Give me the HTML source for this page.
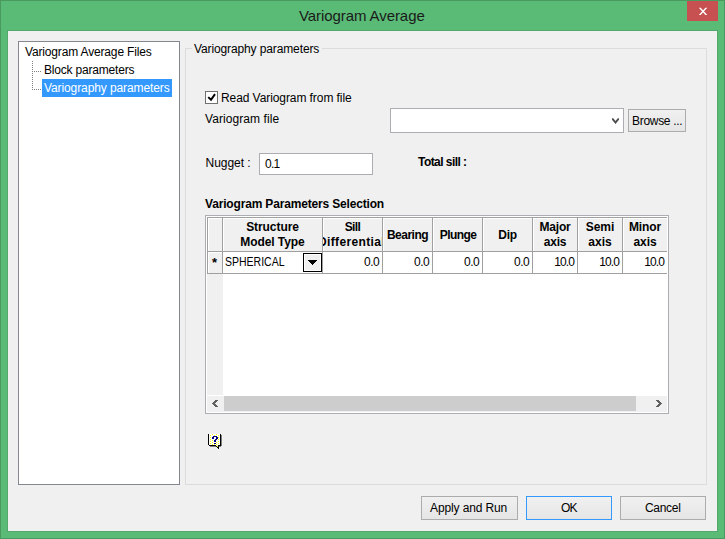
<!DOCTYPE html>
<html>
<head>
<meta charset="utf-8">
<title>Variogram Average</title>
<style>
html,body{margin:0;padding:0;}
body{width:725px;height:539px;overflow:hidden;background:#5abb77;font-family:"Liberation Sans",sans-serif;font-size:12px;color:#000;position:relative;}
.abs{position:absolute;}
.t{position:absolute;white-space:nowrap;line-height:16px;height:16px;font-size:12px;transform-origin:0 50%;}
.b{font-weight:bold;}
#frame{left:0;top:0;width:723px;height:537px;border:1px solid #4a9a60;background:#5abb77;}
#client{left:8px;top:31px;width:709px;height:500px;background:#f0f0f0;}
#clientedge{left:7px;top:30px;width:709px;height:500px;border:1px solid #52a86a;}
#close{left:687px;top:1px;width:31px;height:20px;background:#c75050;}
#tree{left:18px;top:41px;width:160px;height:442px;border:1px solid #828790;background:#fff;}
#sel{left:42px;top:79px;width:130px;height:18px;background:#3399ff;}
.dotv{position:absolute;width:1px;background-image:linear-gradient(to bottom,#808080 50%,transparent 50%);background-size:1px 2px;}
.doth{position:absolute;height:1px;background-image:linear-gradient(to right,#808080 50%,transparent 50%);background-size:2px 1px;}
#group{left:185px;top:48px;width:520px;height:435px;border:1px solid #dcdcdc;}
#grouplab{left:192px;top:40px;width:130px;height:16px;background:#f0f0f0;}
#chk{left:205px;top:91px;width:11px;height:11px;border:1px solid #707070;background:#fff;}
#combo{left:390px;top:108px;width:232px;height:23px;border:1px solid #abadb3;background:#fff;}
.btn{position:absolute;box-sizing:border-box;border:1px solid #acacac;background:linear-gradient(to bottom,#f0f0f0 0%,#ebebeb 50%,#e5e5e5 100%);}
#nugget{left:259px;top:153px;width:112px;height:20px;border:1px solid #abadb3;background:#fff;}
#tbl{left:205px;top:215px;width:462px;height:197px;border:1px solid #abadb3;background:#fff;}
.hc{position:absolute;top:218px;height:33px;background:#f0f0f0;border-left:1px solid #fff;border-top:1px solid #fff;box-sizing:border-box;}
.vl{position:absolute;width:1px;background:#a0a0a0;}
.hl{position:absolute;height:1px;background:#a0a0a0;}
.ht{position:absolute;white-space:nowrap;font-weight:bold;font-size:12px;line-height:15px;text-align:center;}
.num{position:absolute;white-space:nowrap;font-size:12px;line-height:16px;text-align:right;}
</style>
</head>
<body>
<div class="abs" id="frame"></div>
<div class="abs" id="clientedge"></div>
<div class="abs" id="client"></div>

<!-- title -->
<div class="t" id="title" style="left:299px;top:6px;font-size:15px;letter-spacing:-0.08px;line-height:20px;height:20px;color:#1a1a1a;">Variogram Average</div>
<div class="abs" id="close"></div>
<svg class="abs" style="left:697px;top:6px;" width="12" height="11" viewBox="0 0 12 11"><path d="M1.8 1.8 H3.7 L10.3 9.1 H8.4 Z M8.4 1.8 H10.3 L3.7 9.1 H1.8 Z" fill="#fff"/></svg>

<!-- tree -->
<div class="abs" id="tree"></div>
<div class="abs" id="sel"></div>
<div class="dotv" style="left:32px;top:61px;height:29px;"></div>
<div class="doth" style="left:34px;top:71px;width:7px;"></div>
<div class="doth" style="left:34px;top:89px;width:7px;"></div>
<div class="t" id="t1" style="left:25px;top:44px;letter-spacing:-0.16px;">Variogram Average Files</div>
<div class="t" id="t2" style="left:44px;top:62px;letter-spacing:-0.19px;">Block parameters</div>
<div class="t" id="t3" style="left:44px;top:80px;color:#fff;letter-spacing:-0.1px;">Variography parameters</div>

<!-- group -->
<div class="abs" id="group"></div>
<div class="abs" id="grouplab"></div>
<div class="t" id="t4" style="left:194px;top:41px;letter-spacing:-0.12px;">Variography parameters</div>

<div class="abs" id="chk"></div>
<svg class="abs" style="left:206px;top:92px;" width="11" height="11" viewBox="0 0 11 11"><path d="M2.2 5.1 L5.0 7.8 L9.0 2.2" stroke="#000" stroke-width="2" fill="none"/></svg>
<div class="t" id="t5" style="left:221px;top:90px;letter-spacing:-0.08px;">Read Variogram from file</div>
<div class="t" id="t6" style="left:205px;top:111px;letter-spacing:0.08px;">Variogram file</div>

<div class="abs" id="combo"></div>
<svg class="abs" style="left:612px;top:118px;" width="7" height="6" viewBox="0 0 7 6"><path d="M0 0.3 L1.2 0.3 L3.5 3.1 L5.8 0.3 L7 0.3 L7 1.7 L3.5 5.9 L0 1.7 Z" fill="#4d4d4d"/></svg>
<div class="btn" style="left:628px;top:109px;width:58px;height:23px;"></div>
<div class="t" id="t7" style="left:632px;top:113px;letter-spacing:-0.3px;">Browse <span style="letter-spacing:-0.35px;">...</span></div>

<div class="t" id="t8" style="left:205.5px;top:155px;letter-spacing:-0.03px;">Nugget :</div>
<div class="abs" id="nugget"></div>
<div class="t" id="t9" style="left:265px;top:156px;letter-spacing:-0.7px;">0.1</div>
<div class="t b" id="t10" style="left:418px;top:154px;letter-spacing:-0.55px;">Total sill :</div>

<div class="t b" id="t11" style="left:205px;top:196px;letter-spacing:-0.17px;">Variogram Parameters Selection</div>

<!-- table -->
<div class="abs" id="tbl"></div>
<!-- header bg -->
<div class="abs" style="left:207px;top:217px;width:460px;height:35px;background:#f0f0f0;"></div>
<!-- row header stripe -->
<div class="abs" style="left:207px;top:252px;width:16px;height:143px;background:#f0f0f0;"></div>
<div class="hl" style="left:207px;top:217px;width:460px;"></div>
<div class="hl" style="left:207px;top:251px;width:460px;"></div>
<div class="hl" style="left:207px;top:273px;width:460px;"></div>
<div class="vl" style="left:207px;top:217px;height:57px;"></div>
<!-- header cells highlight -->
<div class="hc" style="left:208px;width:14px;"></div>
<div class="hc" style="left:223px;width:99px;"></div>
<div class="hc" style="left:323px;width:59px;"></div>
<div class="hc" style="left:383px;width:49px;"></div>
<div class="hc" style="left:433px;width:49px;"></div>
<div class="hc" style="left:483px;width:49px;"></div>
<div class="hc" style="left:533px;width:44px;"></div>
<div class="hc" style="left:578px;width:44px;"></div>
<div class="hc" style="left:623px;width:44px;"></div>
<div class="abs" style="left:208px;top:252px;width:14px;height:21px;border-left:1px solid #fff;border-top:1px solid #fff;box-sizing:border-box;"></div>
<!-- data row white -->
<div class="abs" style="left:223px;top:252px;width:444px;height:21px;background:#fff;"></div>
<!-- vertical lines -->
<div class="vl" style="left:222px;top:218px;height:55px;"></div>
<div class="vl" style="left:322px;top:218px;height:55px;"></div>
<div class="vl" style="left:382px;top:218px;height:55px;"></div>
<div class="vl" style="left:432px;top:218px;height:55px;"></div>
<div class="vl" style="left:482px;top:218px;height:55px;"></div>
<div class="vl" style="left:532px;top:218px;height:55px;"></div>
<div class="vl" style="left:577px;top:218px;height:55px;"></div>
<div class="vl" style="left:622px;top:218px;height:55px;"></div>

<!-- header texts -->
<div class="ht" id="h1" style="top:220px;left:223px;letter-spacing:-0.07px;width:99px;">Structure<br>Model Type</div>
<div class="ht" id="h2" style="top:220px;left:323px;width:59px;overflow:hidden;"><span style="display:block;letter-spacing:-0.6px;">Sill</span><span style="display:block;margin-left:-7px;width:71px;letter-spacing:0.35px;">Differential</span></div>
<div class="ht" id="h3" style="top:228px;left:383px;letter-spacing:-0.5px;width:49px;">Bearing</div>
<div class="ht" id="h4" style="top:228px;left:433.5px;letter-spacing:-0.6px;width:49px;">Plunge</div>
<div class="ht" id="h5" style="top:228px;left:483px;letter-spacing:-0.3px;width:49px;">Dip</div>
<div class="ht" id="h6" style="top:220px;left:533px;letter-spacing:-0.2px;width:44px;">Major<br>axis</div>
<div class="ht" id="h7" style="top:220px;left:578px;width:44px;">Semi<br>axis</div>
<div class="ht" id="h8" style="top:220px;left:623px;letter-spacing:-0.1px;width:44px;">Minor<br>axis</div>

<!-- data row -->
<div class="t b" id="star" style="left:212px;top:255px;font-size:13px;">*</div>
<div class="t" id="d1" style="left:225px;top:254px;transform:scaleX(0.875);transform-origin:0 0;">SPHERICAL</div>
<div class="abs" style="left:303px;top:253px;width:17px;height:17px;border:1px solid #000;background:#f0f0f0;box-shadow:inset 0 0 0 1px #fff;"></div>
<svg class="abs" style="left:308px;top:260px;" width="9" height="5" viewBox="0 0 9 5" shape-rendering="crispEdges"><rect x="0" y="0" width="9" height="1"/><rect x="1" y="1" width="7" height="1"/><rect x="2" y="2" width="5" height="1"/><rect x="3" y="3" width="3" height="1"/><rect x="4" y="4" width="1" height="1"/></svg>
<div class="num" id="n1" style="letter-spacing:-0.6px;left:323px;top:254px;width:56px;">0.0</div>
<div class="num" id="n2" style="letter-spacing:-0.6px;left:383px;top:254px;width:46px;">0.0</div>
<div class="num" id="n3" style="letter-spacing:-0.6px;left:433px;top:254px;width:46px;">0.0</div>
<div class="num" id="n4" style="letter-spacing:-0.6px;left:483px;top:254px;width:46px;">0.0</div>
<div class="num" id="n5" style="letter-spacing:-0.9px;left:533px;top:254px;width:41px;">10.0</div>
<div class="num" id="n6" style="letter-spacing:-0.9px;left:578px;top:254px;width:41px;">10.0</div>
<div class="num" id="n7" style="letter-spacing:-0.9px;left:623px;top:254px;width:41px;">10.0</div>

<!-- scrollbar -->
<div class="abs" style="left:207px;top:396px;width:460px;height:16px;background:#f0f0f0;"></div>
<div class="abs" style="left:224px;top:396px;width:412px;height:15px;background:#cdcdcd;"></div>
<svg class="abs" style="left:212px;top:400px;" width="6" height="7" viewBox="0 0 6 7" shape-rendering="crispEdges" fill="#606060"><rect x="3" y="0" width="3" height="1"/><rect x="2" y="1" width="3" height="1"/><rect x="1" y="2" width="3" height="1"/><rect x="0" y="3" width="3" height="1"/><rect x="1" y="4" width="3" height="1"/><rect x="2" y="5" width="3" height="1"/><rect x="3" y="6" width="3" height="1"/></svg>
<svg class="abs" style="left:656px;top:400px;" width="6" height="7" viewBox="0 0 6 7" shape-rendering="crispEdges" fill="#606060"><rect x="0" y="0" width="3" height="1"/><rect x="1" y="1" width="3" height="1"/><rect x="2" y="2" width="3" height="1"/><rect x="3" y="3" width="3" height="1"/><rect x="2" y="4" width="3" height="1"/><rect x="1" y="5" width="3" height="1"/><rect x="0" y="6" width="3" height="1"/></svg>

<!-- help icon -->
<svg class="abs" id="help" style="left:208px;top:434px;" width="15" height="16" viewBox="0 0 15 16" shape-rendering="crispEdges">
<rect x="1" y="0" width="11" height="11" fill="#fff"/>
<g fill="#ffff00">
<rect x="2" y="1" width="1" height="1"/><rect x="4" y="0" width="1" height="1"/><rect x="6" y="1" width="1" height="1"/><rect x="8" y="0" width="1" height="1"/><rect x="10" y="1" width="1" height="1"/>
<rect x="2" y="3" width="1" height="1"/><rect x="10" y="3" width="1" height="1"/>
<rect x="2" y="5" width="1" height="1"/><rect x="4" y="6" width="1" height="1"/><rect x="10" y="5" width="1" height="1"/>
<rect x="2" y="7" width="1" height="1"/><rect x="4" y="8" width="1" height="1"/><rect x="8" y="8" width="1" height="1"/><rect x="10" y="7" width="1" height="1"/>
<rect x="2" y="9" width="1" height="1"/><rect x="4" y="10" width="1" height="1"/><rect x="6" y="10" width="1" height="1"/><rect x="8" y="10" width="1" height="1"/><rect x="10" y="9" width="1" height="1"/>
<rect x="9" y="12" width="1" height="1"/>
</g>
<rect x="0" y="0" width="1" height="11" fill="#000"/>
<rect x="12" y="0" width="1" height="11" fill="#000"/>
<rect x="13" y="1" width="1" height="11" fill="#808080"/>
<rect x="1" y="11" width="7" height="1" fill="#000"/>
<rect x="10" y="11" width="3" height="1" fill="#000"/>
<rect x="2" y="12" width="6" height="1" fill="#808080"/>
<rect x="8" y="12" width="1" height="1" fill="#000"/>
<rect x="9" y="13" width="1" height="1" fill="#000"/>
<rect x="10" y="12" width="1" height="3" fill="#000"/>
<rect x="11" y="12" width="2" height="1" fill="#808080"/>
<g fill="#000080">
<rect x="5" y="2" width="4" height="1"/>
<rect x="4" y="3" width="2" height="2"/><rect x="8" y="3" width="2" height="2"/>
<rect x="7" y="5" width="2" height="1"/>
<rect x="6" y="6" width="2" height="2"/>
<rect x="6" y="9" width="2" height="1"/>
</g>
</svg>

<!-- buttons -->
<div class="btn" style="left:421px;top:496px;width:97px;height:24px;"></div>
<div class="t" id="b1" style="left:430px;top:500px;letter-spacing:-0.12px;">Apply and Run</div>
<div class="btn" style="left:526px;top:496px;width:86px;height:24px;border-color:#3399ff;"></div>
<div class="t" id="b2" style="left:561px;top:500px;letter-spacing:-0.8px;">OK</div>
<div class="btn" style="left:620px;top:496px;width:86px;height:24px;"></div>
<div class="t" id="b3" style="left:645px;top:500px;letter-spacing:-0.3px;">Cancel</div>
</body>
</html>
